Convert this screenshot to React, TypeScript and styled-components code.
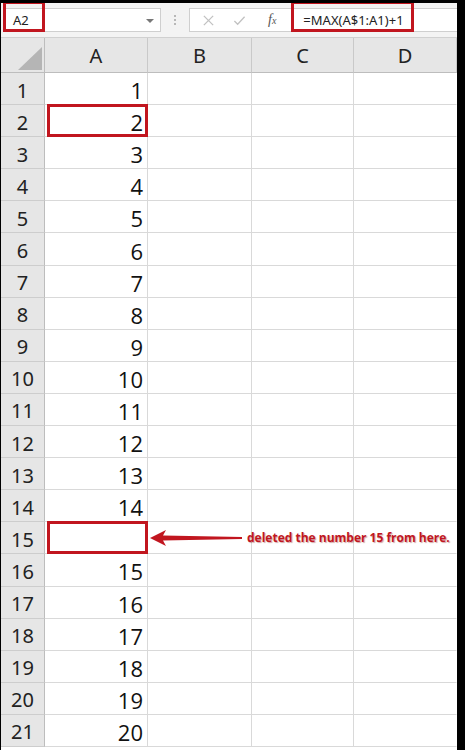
import styled, { createGlobalStyle, css } from 'styled-components';

const GlobalStyle = createGlobalStyle`
  html, body {
    margin: 0;
    padding: 0;
    background: #000;
  }
  body {
    font-family: "Open Sans", "Noto Sans", sans-serif;
  }
`;

const RED = '#c1161f';
const columns = ['A', 'B', 'C', 'D'];

// column A values; row 15 was emptied
const values: (number | null)[] = [
  1, 2, 3, 4, 5, 6, 7, 8, 9, 10, 11, 12, 13, 14, null, 15, 16, 17, 18, 19, 20,
];

function App() {
  return (
    <>
      <GlobalStyle />
      <Frame>
        <Sheet>
          <FormulaBar>
            <NameBox>
              <NameText>A2</NameText>
              <Caret />
            </NameBox>
            <Grip>
              <i />
              <i />
              <i />
            </Grip>
            <FormulaField>
              <ToolIcon viewBox="0 0 14 14">
                <path d="M2 2 L12 12 M12 2 L2 12" stroke="#c2c2c2" strokeWidth="1.4" fill="none" />
              </ToolIcon>
              <ToolIcon viewBox="0 0 14 14">
                <path d="M1.5 7.5 L5 11 L12.5 3" stroke="#c2c2c2" strokeWidth="1.4" fill="none" />
              </ToolIcon>
              <Fx>
                f<sub>x</sub>
              </Fx>
              <FormulaText>=MAX(A$1:A1)+1</FormulaText>
            </FormulaField>
          </FormulaBar>

          <Grid>
            <Corner>
              <svg width="24" height="23" viewBox="0 0 24 23">
                <polygon points="24,0 24,23 0,23" fill="#b5b5b5" />
              </svg>
            </Corner>
            {columns.map((c) => (
              <ColHead key={c}>{c}</ColHead>
            ))}

            {values.map((v, i) => {
              const row = i + 1;
              return (
                <Row key={row}>
                  <RowHead>{row}</RowHead>
                  <Cell marked={row === 2 || row === 15}>
                    {v}
                    {row === 15 && (
                      <Note>
                        <Arrow width="92" height="18" viewBox="0 0 92 18">
                          <polygon points="0,9 16,1 13,6.5 92,8 92,10 13,11.5 16,17" fill={RED} />
                        </Arrow>
                        <NoteText>deleted the number 15 from here.</NoteText>
                      </Note>
                    )}
                  </Cell>
                  <Cell />
                  <Cell />
                  <Cell last />
                </Row>
              );
            })}
          </Grid>
        </Sheet>
      </Frame>
    </>
  );
}

const Frame = styled.div`
  width: 465px;
  height: 750px;
  box-sizing: border-box;
  padding: 3px 8px 0 1px;
  background: #000;
  overflow: hidden;
`;

const Sheet = styled.div`
  width: 456px;
  height: 747px;
  background: #fff;
  overflow: hidden;
`;

const FormulaBar = styled.div`
  height: 35px;
  background: #f3f3f3;
  border-bottom: 1px solid #d0d0d0;
  display: flex;
  align-items: center;
  padding: 0 0 0 4px;
  box-sizing: border-box;
`;

const NameBox = styled.div`
  width: 156px;
  height: 24px;
  box-sizing: border-box;
  background: #fff;
  border: 1px solid #cfcfcf;
  display: flex;
  align-items: center;
  justify-content: space-between;
  padding: 0 6px 0 7px;
`;

const NameText = styled.span`
  position: relative;
  font-family: "Noto Sans", sans-serif;
  font-size: 13px;
  color: #222;

  &::after {
    content: '';
    position: absolute;
    left: -10px;
    top: -10px;
    width: 42px;
    height: 31px;
    box-sizing: border-box;
    border: 3px solid ${RED};
  }
`;

const Caret = styled.span`
  width: 0;
  height: 0;
  border-left: 4px solid transparent;
  border-right: 4px solid transparent;
  border-top: 4px solid #777;
  margin-top: 1px;
`;

const Grip = styled.div`
  width: 28px;
  display: flex;
  flex-direction: column;
  align-items: center;
  gap: 2px;

  i {
    display: block;
    width: 2px;
    height: 2px;
    background: #b8b8b8;
  }
`;

const FormulaField = styled.div`
  flex: 1;
  height: 24px;
  box-sizing: border-box;
  background: #fff;
  border: 1px solid #cfcfcf;
  border-right: none;
  display: flex;
  align-items: center;
  padding-left: 12px;
`;

const ToolIcon = styled.svg`
  width: 13px;
  height: 13px;
  margin-right: 18px;
`;

const Fx = styled.span`
  font-family: "Liberation Serif", serif;
  font-style: italic;
  font-size: 14px;
  color: #555;
  margin-left: 4px;
  margin-right: 23px;

  sub {
    font-size: 10px;
    vertical-align: baseline;
  }
`;

const FormulaText = styled.span`
  position: relative;
  font-family: "Noto Sans", sans-serif;
  font-size: 13px;
  color: #222;
  margin-left: 4px;

  &::after {
    content: '';
    position: absolute;
    left: -12px;
    top: -10px;
    right: -10px;
    height: 31px;
    box-sizing: border-box;
    border: 3px solid ${RED};
  }
`;

const Grid = styled.div`
  display: grid;
  grid-template-columns: 44px 103px 104px 102px 103px;
  grid-template-rows: 35px;
  grid-auto-rows: 32.1px;
`;

const Row = styled.div`
  display: contents;
`;

const headBase = css`
  background: #e6e6e6;
  color: #222;
  font-family: "Noto Sans", sans-serif;
  display: flex;
  align-items: center;
  justify-content: center;
  box-sizing: border-box;
`;

const Corner = styled.div`
  ${headBase};
  border-right: 1px solid #bdbdbd;
  border-bottom: 1px solid #bdbdbd;
  align-items: flex-end;
  justify-content: flex-end;
  padding: 0 2px 2px 0;
`;

const ColHead = styled.div`
  ${headBase};
  font-size: 20px;
  padding-top: 1px;
  border-right: 1px solid #c9c9c9;
  border-bottom: 1px solid #bdbdbd;
`;

const RowHead = styled.div`
  ${headBase};
  font-size: 20px;
  padding-top: 3px;
  border-right: 1px solid #bdbdbd;
  border-bottom: 1px solid #cdcdcd;
`;

const Cell = styled.div<{ marked?: boolean; last?: boolean }>`
  position: relative;
  box-sizing: border-box;
  border-right: 1px solid ${(p) => (p.last ? 'transparent' : '#d9d9d9')};
  border-bottom: 1px solid #d9d9d9;
  display: flex;
  align-items: center;
  justify-content: flex-end;
  padding: 3px 4px 0 0;
  font-family: "Open Sans", sans-serif;
  font-size: 22px;
  color: #111;

  ${(p) =>
    p.marked &&
    css`
      &::after {
        content: '';
        position: absolute;
        left: 2px;
        top: -1px;
        right: -1px;
        bottom: -1px;
        border: 3px solid ${RED};
      }
    `}
`;

const Note = styled.div`
  position: absolute;
  left: 105px;
  top: 50%;
  transform: translateY(-50%);
  display: flex;
  align-items: center;
  gap: 5px;
  white-space: nowrap;
  z-index: 2;
`;

const Arrow = styled.svg`
  display: block;
`;

const NoteText = styled.span`
  font-family: "Open Sans", sans-serif;
  font-weight: 700;
  font-size: 12px;
  color: ${RED};
  text-shadow: 1px 1px 1px rgba(120, 0, 0, 0.35);
`;

export default App;
